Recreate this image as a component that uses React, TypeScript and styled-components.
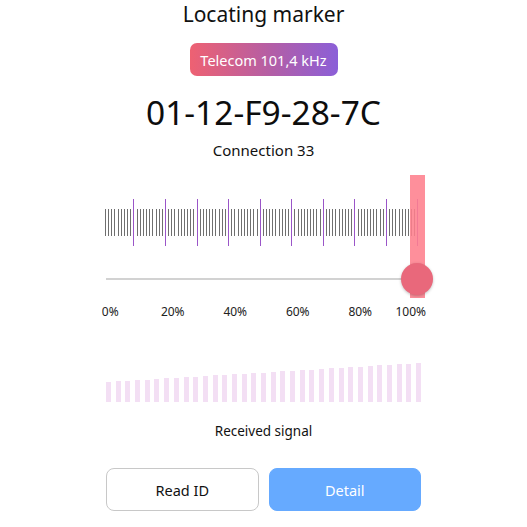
import React from 'react'
import styled, { createGlobalStyle } from 'styled-components'

const GlobalStyle = createGlobalStyle`
    body {
        margin: 0;
        background: #ffffff;
        font-family: "Noto Sans", "Open Sans", sans-serif;
        color: #111111;
    }
`

const TICKS = 100
const BARS = 33
const LABELS = ['0%', '20%', '40%', '60%', '80%', '100%']

export default function App() {
    return (
        <>
            <GlobalStyle />
            <Screen>
                <Title>Locating marker</Title>
                <Badge>Telecom 101,4 kHz</Badge>
                <MarkerId>01-12-F9-28-7C</MarkerId>
                <Connection>Connection 33</Connection>

                <Scale>
                    <TickRow>
                        {Array.from({ length: TICKS }).map((_, i) => (
                            <Tick key={i} $major={i % 10 === 9} />
                        ))}
                    </TickRow>
                    <Track />
                    <Highlight />
                    <Thumb />
                </Scale>

                <Labels>
                    {LABELS.map((l, i) => (
                        <Label key={l} $last={i === LABELS.length - 1}>{l}</Label>
                    ))}
                </Labels>

                <Signal>
                    {Array.from({ length: BARS }).map((_, i) => (
                        <SignalBar key={i} $h={20 + (19 * i) / (BARS - 1)} />
                    ))}
                </Signal>
                <Caption>Received signal</Caption>

                <Actions>
                    <Button>Read ID</Button>
                    <Button $primary>Detail</Button>
                </Actions>
            </Screen>
        </>
    )
}

const Screen = styled.div`
    width: 315px;
    margin: 0 auto;
    display: flex;
    flex-direction: column;
    align-items: center;
`

const Title = styled.h1`
    margin: 1px 0 0;
    font-size: 21px;
    line-height: 27px;
    font-weight: 400;
    color: #111;
`

const Badge = styled.div`
    margin-top: 15px;
    width: 148px;
    height: 33px;
    border-radius: 7px;
    background: linear-gradient(90deg, #ee6172 0%, #b35ea6 55%, #8b5fd8 100%);
    color: #ffffff;
    font-size: 14.5px;
    display: flex;
    align-items: center;
    justify-content: center;
`

const MarkerId = styled.div`
    margin-top: 15px;
    font-size: 33.5px;
    line-height: 43px;
    color: #0d0d0d;
`

const Connection = styled.div`
    margin-top: 6px;
    font-size: 15px;
    line-height: 21px;
    color: #111;
`

const Scale = styled.div`
    position: relative;
    align-self: stretch;
    height: 123px;
    margin-top: 14px;
    margin-left: -1px;
    padding-top: 24px;
    box-sizing: border-box;
`

const TickRow = styled.div`
    width: 315px;
    height: 47px;
    display: flex;
    align-items: center;
    justify-content: space-between;
`

const Tick = styled.div<{ $major?: boolean }>`
    width: 1px;
    height: ${({ $major }) => $major ? '47px' : '27px'};
    background: ${({ $major }) => $major ? '#9a55c8' : '#6f6f6f'};
`

const Track = styled.div`
    margin-top: 32px;
    margin-left: 1px;
    width: 300px;
    height: 2px;
    background: #d2d2d2;
`

const Highlight = styled.div`
    position: absolute;
    top: 0;
    left: 305px;
    width: 15px;
    height: 123px;
    background: rgba(254, 127, 141, 0.88);
`

const Thumb = styled.div`
    position: absolute;
    top: 88px;
    left: 296px;
    width: 32px;
    height: 32px;
    border-radius: 50%;
    background: #e9687b;
    box-shadow: 0 1px 3px rgba(0, 0, 0, 0.25);
`

const Labels = styled.div`
    align-self: flex-start;
    margin-left: -27px;
    margin-top: 6px;
    display: grid;
    grid-template-columns: repeat(5, 62.5px) auto;
`

const Label = styled.span<{ $last?: boolean }>`
    font-size: 12px;
    line-height: 16px;
    color: #222;
    text-align: ${({ $last }) => $last ? 'left' : 'center'};
    padding-left: ${({ $last }) => $last ? '4px' : '0'};
`

const Signal = styled.div`
    margin-top: 43px;
    width: 315px;
    height: 39px;
    display: flex;
    align-items: flex-end;
    justify-content: space-between;
`

const SignalBar = styled.div<{ $h: number }>`
    width: 5px;
    height: ${({ $h }) => $h}px;
    background: #f3dff4;
`

const Caption = styled.div`
    margin-top: 19px;
    font-size: 13.5px;
    line-height: 20px;
    color: #111;
`

const Actions = styled.div`
    margin-top: 27px;
    width: 315px;
    display: grid;
    grid-template-columns: 1fr 1fr;
    gap: 10px;
`

const Button = styled.button<{ $primary?: boolean }>`
    height: 43px;
    border-radius: 8px;
    font-family: "Noto Sans", "Open Sans", sans-serif;
    font-size: 14.5px;
    border: 1px solid ${({ $primary }) => $primary ? '#66aaff' : '#c8c8c8'};
    background: ${({ $primary }) => $primary ? '#66aaff' : '#ffffff'};
    color: ${({ $primary }) => $primary ? '#ffffff' : '#111111'};
    padding: 0;
    cursor: pointer;
`
